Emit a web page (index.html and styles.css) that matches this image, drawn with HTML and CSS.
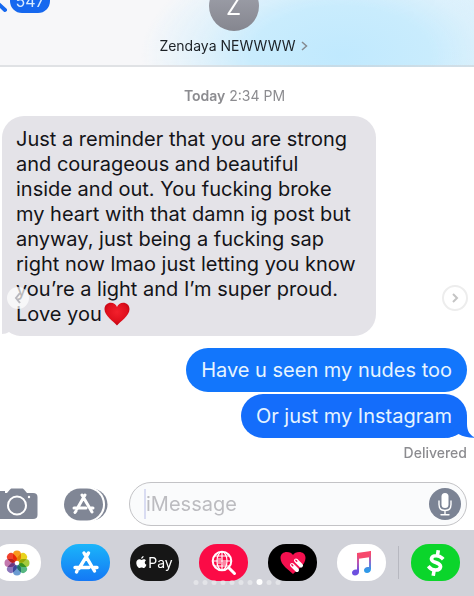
FILE: index.html
```html
<!DOCTYPE html>
<html lang="en">
<head>
    <meta charset="UTF-8">
    <meta name="viewport" content="width=device-width, initial-scale=1.0">
    <title>Messages</title>
    <link rel="stylesheet" href="styles.css">
</head>
<body>
    <div class="screen">
        <header class="header">
            <a href="#" class="back" aria-label="Back, 547 unread">
                <svg width="8" height="26" viewBox="0 0 8 26"><path d="M-8 11L5 23" fill="none" stroke="#1668ef" stroke-width="4" stroke-linecap="round"/></svg>
                <span class="unread">547</span>
            </a>
            <div class="avatar">Z</div>
            <a href="#" class="contact">Zendaya NEWWWW
                <svg width="7" height="10" viewBox="0 0 7 10"><path d="M1 1L5.500 5L1 9" fill="none" stroke="#85898f" stroke-width="1.500"/></svg>
            </a>
        </header>

        <main class="thread">
            <p class="time"><b>Today</b> 2:34 PM</p>
            <div class="bubble received">
                Just a reminder that you are strong<br>
                and courageous and beautiful<br>
                inside and out. You fucking broke<br>
                my heart with that damn ig post but<br>
                anyway, just being a fucking sap<br>
                right now lmao just letting you know<br>
                you’re a light and I’m super proud.<br>
                Love you<svg class="heart" width="26" height="24" viewBox="0 0 26 24" role="img" aria-label="heart">
                    <defs>
                        <radialGradient id="heartRed" cx="50%" cy="40%" r="65%">
                            <stop offset="0" stop-color="#f3202c"/>
                            <stop offset="0.6" stop-color="#e0101d"/>
                            <stop offset="1" stop-color="#b5000d"/>
                        </radialGradient>
                    </defs>
                    <path d="M13 23.500C10 19.500 0.500 14 0.500 7.200C0.500 3 3.500 0.800 6.800 0.800C9.800 0.800 12 2.500 13 5C14 2.500 16.200 0.800 19.200 0.800C22.500 0.800 25.500 3 25.500 7.200C25.500 14 16 19.500 13 23.500Z" fill="url(#heartRed)"/>
                </svg>
                <svg class="notch" width="18" height="5" viewBox="0 0 18 5"><path d="M0 5V3C3 3 5 2 7 1C10 3 13 4.500 18 5Z" fill="#fff"/></svg>
            </div>
            <div class="bubble sent">Have u seen my nudes too</div>
            <div class="bubble sent last">Or just my Instagram
                <svg class="tail" width="28" height="30" viewBox="0 0 28 30"><path d="M0 30C5 29.500 9 28 12.500 26C17 28.500 22 29.800 28 29.800V29C24 27 21 23 21 16V8L8 20Z" fill="#146dfb"/></svg>
            </div>
            <p class="status">Delivered</p>
        </main>

        <form class="compose">
            <button type="button" class="icon-btn camera" aria-label="Camera">
                <svg width="38" height="32" viewBox="0 0 38 32">
                    <path d="M0 5V3H5V5H7L10 1.500C10.500 1 11 0.500 12 0.500H22C23 0.500 23.500 1 24 1.500L27 5H33C36 5 37.500 6.500 37.500 9V27C37.500 29.500 36 31 33 31H0Z" fill="#808695"/>
                    <circle cx="17" cy="17.500" r="9" fill="none" stroke="#fff" stroke-width="2"/>
                    <circle cx="29" cy="9" r="1.200" fill="#fff"/>
                </svg>
            </button>
            <button type="button" class="icon-btn apps" aria-label="Apps">
                <svg width="44" height="33" viewBox="0 0 44 33">
                    <rect x="4" y="0.500" width="39.500" height="32" rx="16" fill="#808695"/>
                    <rect x="-1" y="-1" width="42" height="35" rx="17" fill="#fff"/>
                    <rect x="0" y="0.500" width="39" height="32" rx="16" fill="#808695"/>
                    <g fill="none" stroke="#fff" stroke-width="3" stroke-linecap="round">
                        <path d="M21 7L13 21M18 7L28 24M10 20H22M27 20H29M12 23L11 24.500"/>
                    </g>
                </svg>
            </button>
            <div class="field">
                <input type="text" placeholder="iMessage" aria-label="iMessage">
                <button type="button" class="mic" aria-label="Dictate">
                    <svg width="32" height="32" viewBox="0 0 32 32">
                        <rect x="12.500" y="5" width="7" height="15" rx="3.500" fill="#fff"/>
                        <path d="M10 13V16.500C10 20.500 12.500 22.500 16 22.500S22 20.500 22 16.500V13M16 22.500V26.500M12 26.800H20" fill="none" stroke="#fff" stroke-width="1.400" stroke-linecap="round"/>
                    </svg>
                </button>
            </div>
        </form>

        <nav class="app-strip">
            <button class="app photos" aria-label="Photos">
                <svg width="26" height="26" viewBox="-13 -13 26 26">
                    <g class="petals">
                        <rect x="-4" y="-12.500" width="8" height="10.500" rx="4" fill="#f89a1c"/>
                        <rect x="-4" y="-12.500" width="8" height="10.500" rx="4" fill="#e8d21d" transform="rotate(45)"/>
                        <rect x="-4" y="-12.500" width="8" height="10.500" rx="4" fill="#a5cb3c" transform="rotate(90)"/>
                        <rect x="-4" y="-12.500" width="8" height="10.500" rx="4" fill="#56b781" transform="rotate(135)"/>
                        <rect x="-4" y="-12.500" width="8" height="10.500" rx="4" fill="#6b9bd1" transform="rotate(180)"/>
                        <rect x="-4" y="-12.500" width="8" height="10.500" rx="4" fill="#8b76bb" transform="rotate(225)"/>
                        <rect x="-4" y="-12.500" width="8" height="10.500" rx="4" fill="#c377ad" transform="rotate(270)"/>
                        <rect x="-4" y="-12.500" width="8" height="10.500" rx="4" fill="#f0402c" transform="rotate(315)"/>
                    </g>
                    <circle r="2" fill="#fff"/>
                </svg>
            </button>
            <button class="app store" aria-label="App Store">
                <svg width="28" height="26" viewBox="0 0 28 26">
                    <g fill="none" stroke="#fff" stroke-width="3.400" stroke-linecap="round">
                        <path d="M16.500 3L7 18.500M12 3L22.500 21M3 17.500H17M22 17.500H25M5 21L4.500 22"/>
                    </g>
                </svg>
            </button>
            <button class="app pay" aria-label="Apple Pay">
                <svg width="11" height="13" viewBox="0 0 11 13"><path d="M7.600 0C7.700 1.500 6.500 2.800 5.200 2.800C5.100 1.400 6.200 0.200 7.600 0ZM9.900 4.400C8.200 5.500 8.400 7.800 10.400 8.700C9.900 10.200 8.900 11.900 7.800 11.900C6.900 11.900 6.600 11.400 5.600 11.400C4.600 11.400 4.200 11.900 3.400 11.900C1.900 11.900 0.300 9.100 0.300 6.800C0.300 4.500 1.800 3.300 3.300 3.300C4.300 3.300 5 3.900 5.600 3.900C6.200 3.900 7 3.200 8.100 3.200C8.900 3.200 9.500 3.700 9.900 4.400Z" fill="#fff"/></svg>
                <span>Pay</span>
            </button>
            <button class="app images" aria-label="Image search">
                <svg width="26" height="26" viewBox="0 0 26 26">
                    <g fill="none" stroke="#fff">
                        <circle cx="11" cy="11" r="9.300" stroke-width="2"/>
                        <path d="M18 18L23.500 23.500" stroke-width="3" stroke-linecap="round"/>
                        <path d="M11 2V20M2 11H20M4 6H18M4 16H18" stroke-width="1.200"/>
                        <ellipse cx="11" cy="11" rx="5" ry="9" stroke-width="1.200"/>
                    </g>
                    <path d="M7 8H10V10H7ZM12 12H15V15H12ZM7 12H10V14H7Z" fill="#fff" opacity="0.5"/>
                </svg>
            </button>
            <button class="app touch" aria-label="Digital Touch">
                <svg width="26" height="24" viewBox="0 0 26 24">
                    <path d="M13 23C9 19 0.500 14 0.500 7C0.500 3 3.500 1 6.800 1C9.500 1 12 2 13 4C14 2 16.500 1 19.200 1C22.500 1 25.500 3 25.500 7C25.500 14 17 19 13 23Z" fill="#f5104f"/>
                    <g fill="none" stroke="#fff" stroke-width="4" stroke-linecap="round">
                        <path d="M16 9.500L21 14.500M12 14L17 19"/>
                    </g>
                    <g fill="none" stroke="#f5104f" stroke-linecap="round">
                        <path d="M15.800 9.300L16.800 10.300M11.800 13.800L12.800 14.800" stroke-width="1.400"/>
                    </g>
                </svg>
            </button>
            <button class="app music" aria-label="Music">
                <svg width="22" height="26" viewBox="0 0 22 26">
                    <defs>
                        <linearGradient id="noteFill" gradientUnits="userSpaceOnUse" x1="0" y1="1" x2="0" y2="25">
                            <stop offset="0.150" stop-color="#f7486c"/>
                            <stop offset="0.500" stop-color="#b757b5"/>
                            <stop offset="0.800" stop-color="#6d50df"/>
                        </linearGradient>
                        <linearGradient id="noteBlue" gradientUnits="userSpaceOnUse" x1="0" y1="1" x2="0" y2="23">
                            <stop offset="0.150" stop-color="#f7486c"/>
                            <stop offset="0.500" stop-color="#8c6bd0"/>
                            <stop offset="0.850" stop-color="#3099e8"/>
                        </linearGradient>
                    </defs>
                    <path d="M6 3L20 1V7L6 9Z" fill="#f7486c"/>
                    <path d="M6 3H8V22C8 24 6 25.500 4 25.500S1 24.500 1 22.500S3 19 6 19.500Z" fill="url(#noteFill)"/>
                    <path d="M18 2L20 1V19C20 21.500 18 23 16 23S13 22 13 20S15 16.500 18 17Z" fill="url(#noteBlue)"/>
                </svg>
            </button>
            <span class="divider"></span>
            <button class="app cash" aria-label="Cash">
                <svg width="20" height="26" viewBox="0 0 20 26"><path d="M16 8C13.500 5.300 6.500 4.700 5.500 8.500C4.500 13.500 15.500 11.500 14.500 17C13.500 21.500 6 20.500 3.500 17.500M12 2L11.500 5M8 21L7.500 24" fill="none" stroke="#fff" stroke-width="3.600" stroke-linecap="square"/></svg>
            </button>
        </nav>

        <!-- Gallery controls -->
        <button class="slide-btn prev" aria-label="Previous">
            <svg width="8" height="12" viewBox="0 0 8 12"><path d="M6 1L2 6L6 11" fill="none" stroke="#b8b8be" stroke-width="2"/></svg>
        </button>
        <button class="slide-btn next" aria-label="Next">
            <svg width="8" height="12" viewBox="0 0 8 12"><path d="M2 2L6 6L2 10" fill="none" stroke="#c4c4c4" stroke-width="2"/></svg>
        </button>
        <div class="dots">
            <i></i><i></i><i></i><i></i><i></i><i></i><i></i><i class="active"></i><i></i><i></i>
        </div>
    </div>
</body>
</html>
```
FILE: styles.css
```css
/* General Styles */
* {
    box-sizing: border-box;
}

body {
    margin: 0;
    background: #fff;
    font-family: Inter, "Liberation Sans", sans-serif;
    color: #141418;
}

button {
    border: none;
    padding: 0;
    background: none;
    cursor: pointer;
}

a {
    text-decoration: none;
}

svg {
    flex-shrink: 0;
}

.screen {
    position: relative;
    display: flex;
    flex-direction: column;
    min-height: 100vh;
    overflow: hidden;
}

/* Header */
.header {
    position: relative;
    display: flex;
    flex-direction: column;
    align-items: center;
    justify-content: flex-end;
    height: 67px;
    padding: 0 7px 10px 0;
    overflow: hidden;
    border-bottom: 2px solid rgba(190, 195, 200, 0.4);
    background: radial-gradient(ellipse 200px 110px at 72% 85%, #c0e9fe 0%, #c9ecfd 45%, rgba(215, 239, 252, 0.7) 70%, rgba(247, 247, 249, 0) 100%), linear-gradient(90deg, #f7f7f9 60%, #e2f3fc 100%);
}

.back {
    position: absolute;
    left: 0;
    bottom: 52px;
    display: flex;
    align-items: flex-end;
    gap: 2px;
}

.unread {
    width: 40px;
    border-radius: 12px;
    background: #1668ef;
    color: #d9ecff;
    font-size: 16px;
    line-height: 24px;
    text-align: center;
}

.avatar {
    flex-shrink: 0;
    width: 50px;
    height: 50px;
    margin-bottom: 6px;
    border-radius: 50%;
    background: linear-gradient(#a4a6b0, #85868f);
    color: #fff;
    font-size: 24px;
    line-height: 52px;
    text-align: center;
}

.contact {
    display: flex;
    align-items: center;
    gap: 5px;
    color: #1c2126;
    font-size: 14px;
    line-height: 18px;
}

/* Messages */
.thread {
    display: flex;
    flex: 1;
    flex-direction: column;
    align-items: flex-end;
    padding: 20px 7px 0 2px;
}

.time {
    align-self: center;
    margin: 0 0 11px;
    color: #8c8c90;
    font-size: 14px;
    line-height: 18px;
}

.time b {
    font-weight: 600;
}

.bubble {
    position: relative;
    padding: 9px 15px;
    border-radius: 22px;
    font-size: 20px;
    line-height: 26px;
    white-space: nowrap;
}

.received {
    align-self: flex-start;
    width: 374px;
    max-width: 100%;
    margin-bottom: 12px;
    padding: 11px 14px 9px;
    border-bottom-left-radius: 0;
    background: #e4e3e8;
    line-height: 25px;
}

.heart {
    margin-left: 2px;
    vertical-align: -5px;
}

.notch {
    position: absolute;
    left: 0;
    bottom: 0;
}

.sent {
    margin-bottom: 2px;
    background: #1276fc;
    color: #e6f4ff;
}

.last {
    background: #146dfb;
}

.tail {
    position: absolute;
    right: -7px;
    bottom: 0;
}

.status {
    margin: 4px 0 0;
    color: #8c8c90;
    font-size: 14px;
    font-weight: 500;
    line-height: 18px;
}

/* Compose bar */
.compose {
    display: flex;
    align-items: center;
    margin: 0;
    padding: 0 7px 4px 0;
}

.icon-btn {
    display: flex;
}

.camera {
    margin-right: 26px;
}

.apps {
    margin-right: 21px;
}

.field {
    display: flex;
    flex: 1;
    align-items: center;
    min-width: 0;
    height: 44px;
    padding: 0 5px 0 14px;
    border: 1px solid #c3c3c6;
    border-radius: 22px;
    background: #fafbfc;
}

.field input {
    flex: 1;
    min-width: 0;
    height: 30px;
    padding: 0;
    border: none;
    border-left: 2px solid #d9dcf2;
    outline: none;
    background: none;
    font: 20px Inter, "Liberation Sans", sans-serif;
}

.field input::placeholder {
    color: #bcbcc0;
}

.mic {
    display: flex;
    border-radius: 50%;
    background: #7b8394;
}

/* App strip */
.app-strip {
    display: flex;
    align-items: center;
    gap: 20px;
    height: 66px;
    padding-bottom: 1px;
    background: #d1d2d9;
}

.app {
    display: flex;
    flex-shrink: 0;
    align-items: center;
    justify-content: center;
    width: 49px;
    height: 37px;
    border-radius: 18px;
}

.photos {
    margin-left: -8px;
    background: #fff;
}

.petals rect {
    mix-blend-mode: multiply;
}

.store {
    background: linear-gradient(#1bb5fa, #1478f5);
}

.pay {
    gap: 1px;
    background: #161616;
    color: #fff;
    font: 14px Inter, "Liberation Sans", sans-serif;
}

.images {
    background: #fb0b46;
}

.touch {
    background: #000;
}

.music {
    background: #fff;
}

.cash {
    background: #0bd52b;
}

.divider {
    width: 1px;
    height: 33px;
    margin: 0 -8px;
    background: #b7b8c0;
}

/* Gallery controls */
.slide-btn {
    position: absolute;
    top: 50%;
    display: flex;
    align-items: center;
    justify-content: center;
    border-radius: 50%;
}

.prev {
    left: 7px;
    width: 22px;
    height: 22px;
    margin-top: -11px;
    background: rgba(255, 255, 255, 0.7);
}

.next {
    right: 6px;
    width: 26px;
    height: 26px;
    margin-top: -13px;
    border: 2px solid #ededed;
    background: #fff;
}

.dots {
    position: absolute;
    bottom: 11px;
    left: 50%;
    display: flex;
    align-items: center;
    gap: 4px;
    transform: translateX(-50%);
}

.dots i {
    width: 5px;
    height: 5px;
    border-radius: 50%;
    background: rgba(255, 255, 255, 0.4);
}

.dots .active {
    width: 6px;
    height: 6px;
    background: #fff;
}
```
